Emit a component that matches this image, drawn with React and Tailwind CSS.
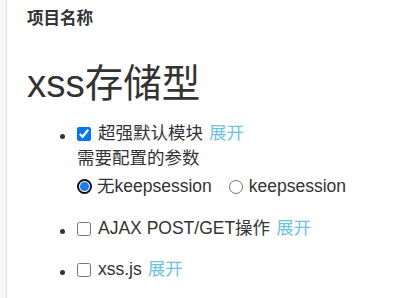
import React from 'react';

const font = { fontFamily: '"Liberation Sans", "Noto Sans CJK SC", Arial, sans-serif' };

function Expand() {
  return <a className="ml-[6px] text-[#6ec3df] cursor-pointer">展开</a>;
}

function Radio({ checked }) {
  return checked ? (
    <span className="mr-[5px] flex h-[15px] w-[15px] items-center justify-center rounded-full border-[2.5px] border-[#111]">
      <span className="h-[9px] w-[9px] rounded-full bg-[#1a7cf5]" />
    </span>
  ) : (
    <span className="mr-[6px] h-[14px] w-[14px] rounded-full border border-[#767676] bg-white" />
  );
}

export default function App() {
  return (
    <div className="flex h-[298px] w-[407px] overflow-hidden bg-white text-[#333]" style={font}>
      <div className="w-[7px] shrink-0 border-r border-[#e3e3e3] bg-[#f7f7f7]" />
      <div className="flex-1 pl-[20px]">
        <div className="pt-[7px] text-[16.5px] font-bold leading-[22px] text-[#333]">项目名称</div>
        <h1 className="mt-[32px] text-[38.5px] leading-[46px] text-[#333]">xss存储型</h1>
        <ul className="mt-[14px] list-disc pl-[50px] text-[17.5px] leading-[25px]">
          <li className="mb-[17px]">
            <label className="flex items-center">
              <input type="checkbox" defaultChecked className="mr-[7px] h-[14px] w-[14px]" />
              超强默认模块<Expand />
            </label>
            <div>需要配置的参数</div>
            <div className="mt-[3px] flex items-center">
              <label className="flex items-center">
                <Radio checked />
                无keepsession
              </label>
              <label className="ml-[17px] flex items-center">
                <Radio />
                keepsession
              </label>
            </div>
          </li>
          <li className="mb-[16px]">
            <label className="flex items-center">
              <input type="checkbox" className="mr-[7px] h-[14px] w-[14px]" />
              AJAX POST/GET操作<Expand />
            </label>
          </li>
          <li>
            <label className="flex items-center">
              <input type="checkbox" className="mr-[7px] h-[14px] w-[14px]" />
              xss.js<Expand />
            </label>
          </li>
        </ul>
      </div>
    </div>
  );
}
